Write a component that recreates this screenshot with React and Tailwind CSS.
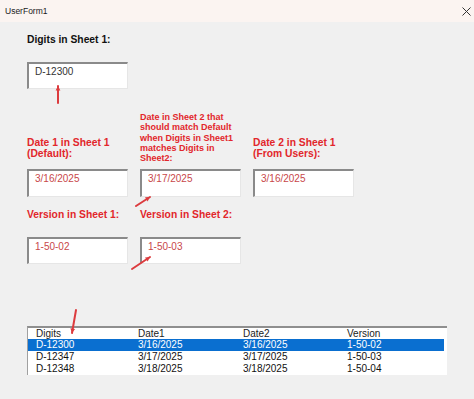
import React from 'react';

const RED = 'text-[#e2262b]';

const rows = [
  { digits: 'D-12300', date1: '3/16/2025', date2: '3/16/2025', version: '1-50-02', selected: true },
  { digits: 'D-12347', date1: '3/17/2025', date2: '3/17/2025', version: '1-50-03' },
  { digits: 'D-12348', date1: '3/18/2025', date2: '3/18/2025', version: '1-50-04' }
];

const TextBox = ({ value, red = false, tall = false }) => (
  <div
    className={`w-[101px] ${tall ? 'h-[28px]' : 'h-[27px]'} bg-white border-t-2 border-l-2 border-t-[#8a8a8a] border-l-[#8a8a8a] border-r border-b border-r-[#e6e6e6] border-b-[#e6e6e6] pl-[6px] pt-[2px] text-[10px] leading-[12px] ${red ? 'text-[#c8474a]' : 'text-[#333333]'}`}
  >
    {value}
  </div>
);

const Arrow = ({ x1, y1, x2, y2 }) => {
  const angle = Math.atan2(y2 - y1, x2 - x1);
  const len = 5;
  const spread = 0.5;
  const ax = x2 - len * Math.cos(angle - spread);
  const ay = y2 - len * Math.sin(angle - spread);
  const bx = x2 - len * Math.cos(angle + spread);
  const by = y2 - len * Math.sin(angle + spread);
  return (
    <g>
      <line x1={x1} y1={y1} x2={x2} y2={y2} stroke="#dc3b3e" strokeWidth="2" strokeLinecap="round" />
      <polygon points={`${x2},${y2} ${ax},${ay} ${bx},${by}`} fill="#dc3b3e" />
    </g>
  );
};

const App = () => {
  return (
    <div
      className="relative w-[474px] h-[399px] overflow-hidden bg-[#f0f0f0]"
      style={{ fontFamily: '"Liberation Sans", Arial, sans-serif' }}
    >
      <div className="flex h-[22px] items-center justify-between bg-[#fbf4f1] pl-[5px] pr-[3px]">
        <span className="text-[8.5px] text-[#1a1a1a]">UserForm1</span>
        <svg width="9" height="9" viewBox="0 0 9 9">
          <path d="M0.5 0.5 L8.5 8.5 M8.5 0.5 L0.5 8.5" stroke="#333" strokeWidth="1" />
        </svg>
      </div>

      <div className="pl-[27px]">
        <div className="mt-[12px] text-[10.3px] leading-[12px] font-bold text-[#111]">Digits in Sheet 1:</div>
        <div className="mt-[16px]">
          <TextBox value="D-12300" />
        </div>

        <div className="mt-[23px] grid grid-cols-[101px_101px_101px] gap-x-[12px] items-start">
          <div className={`pt-[24.5px] text-[10.3px] leading-[11px] font-bold ${RED}`}>
            Date 1 in Sheet 1
            <br />
            (Default):
          </div>
          <div className={`text-[9px] leading-[10.3px] font-bold ${RED} whitespace-nowrap`}>
            Date in Sheet 2 that
            <br />
            should match Default
            <br />
            when Digits in Sheet1
            <br />
            matches Digits in
            <br />
            Sheet2:
          </div>
          <div className={`pt-[24.5px] text-[10.3px] leading-[11px] font-bold ${RED}`}>
            Date 2 in Sheet 1
            <br />
            (From Users):
          </div>
        </div>

        <div className="mt-[5.5px] grid grid-cols-[101px_101px_101px] gap-x-[12px]">
          <TextBox value="3/16/2025" red tall />
          <TextBox value="3/17/2025" red tall />
          <TextBox value="3/16/2025" red tall />
        </div>

        <div className={`mt-[12px] grid grid-cols-[101px_101px] gap-x-[12px] text-[10.3px] leading-[12px] font-bold ${RED}`}>
          <div className="whitespace-nowrap">Version in Sheet 1:</div>
          <div className="whitespace-nowrap">Version in Sheet 2:</div>
        </div>

        <div className="mt-[16px] grid grid-cols-[101px_101px] gap-x-[12px]">
          <TextBox value="1-50-02" red />
          <TextBox value="1-50-03" red />
        </div>

        <div className="mt-[62px] w-[420px] h-[49px] bg-white border-t-2 border-t-[#8f8f8f] border-l border-l-[#a0a0a0] pr-[3px] text-[10px]">
          <div className="grid h-[11px] grid-cols-[102px_105px_104px_1fr] pl-[8px] leading-[11px] text-[#222]">
            <span>Digits</span>
            <span>Date1</span>
            <span>Date2</span>
            <span>Version</span>
          </div>
          {rows.map((r) => (
            <div
              key={r.digits}
              className={`grid h-[12px] grid-cols-[102px_105px_104px_1fr] pl-[8px] leading-[12px] ${
                r.selected ? 'bg-[#0a6fd0] text-white' : 'text-[#111]'
              }`}
            >
              <span>{r.digits}</span>
              <span>{r.date1}</span>
              <span>{r.date2}</span>
              <span>{r.version}</span>
            </div>
          ))}
        </div>
      </div>

      <svg className="pointer-events-none absolute left-0 top-0" width="474" height="399">
        <Arrow x1={58} y1={103} x2={58} y2={86} />
        <Arrow x1={136} y1={206} x2={150} y2={197} />
        <Arrow x1={132} y1={269} x2={150} y2={257} />
        <Arrow x1={76} y1={310} x2={72} y2={333} />
      </svg>
    </div>
  );
};

export default App;
